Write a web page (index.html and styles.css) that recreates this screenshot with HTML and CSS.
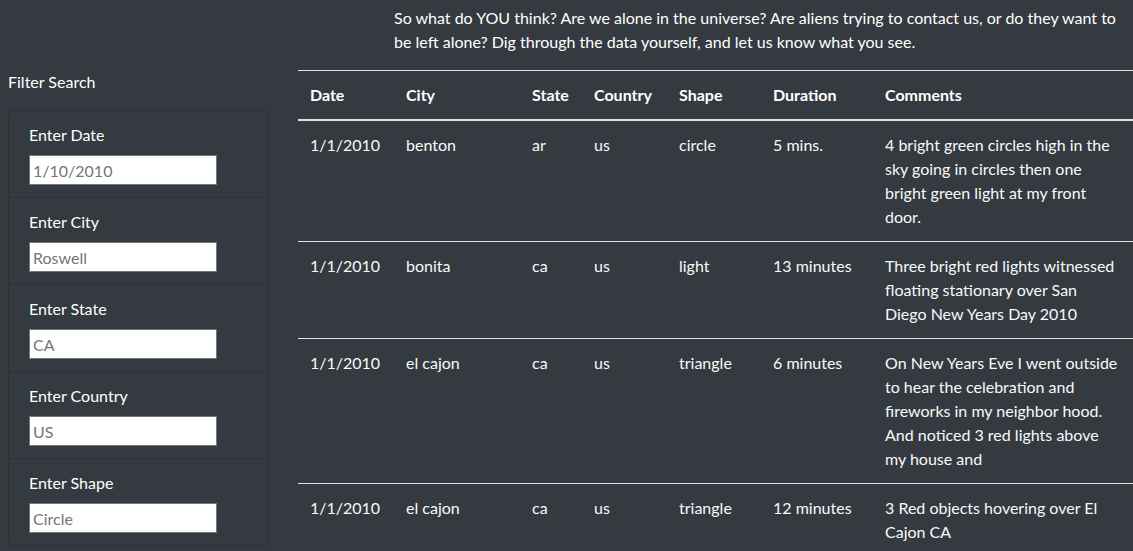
FILE: index.html
```html
<!DOCTYPE html>
<html lang="en">
<head>
<meta charset="utf-8">
<title>UFO Sightings</title>
<link rel="stylesheet" href="styles.css">
</head>
<body>
<div class="page">
  <aside class="sidebar">
    <div class="filter-title">Filter Search</div>
    <ul class="filters">
      <li class="filter-item"><label class="filter-label" for="date">Enter Date</label><input class="filter-input" id="date" type="text" placeholder="1/10/2010"></li>
      <li class="filter-item"><label class="filter-label" for="city">Enter City</label><input class="filter-input" id="city" type="text" placeholder="Roswell"></li>
      <li class="filter-item"><label class="filter-label" for="state">Enter State</label><input class="filter-input" id="state" type="text" placeholder="CA"></li>
      <li class="filter-item"><label class="filter-label" for="country">Enter Country</label><input class="filter-input" id="country" type="text" placeholder="US"></li>
      <li class="filter-item"><label class="filter-label" for="shape">Enter Shape</label><input class="filter-input" id="shape" type="text" placeholder="Circle"></li>
    </ul>
  </aside>
  <main class="main">
    <p class="intro">So what do YOU think? Are we alone in the universe? Are aliens trying to contact us, or do they want to be left alone? Dig through the data yourself, and let us know what you see.</p>
    <table class="ufo-table">
      <colgroup>
        <col class="c-date"><col class="c-city"><col class="c-state"><col class="c-country"><col class="c-shape"><col class="c-duration"><col class="c-comments">
      </colgroup>
      <thead>
        <tr><th>Date</th><th>City</th><th>State</th><th>Country</th><th>Shape</th><th>Duration</th><th>Comments</th></tr>
      </thead>
      <tbody>
        <tr><td>1/1/2010</td><td>benton</td><td>ar</td><td>us</td><td>circle</td><td>5 mins.</td><td>4 bright green circles high in the sky going in circles then one bright green light at my front door.</td></tr>
        <tr><td>1/1/2010</td><td>bonita</td><td>ca</td><td>us</td><td>light</td><td>13 minutes</td><td>Three bright red lights witnessed floating stationary over San Diego New Years Day 2010</td></tr>
        <tr><td>1/1/2010</td><td>el cajon</td><td>ca</td><td>us</td><td>triangle</td><td>6 minutes</td><td>On New Years Eve I went outside to hear the celebration and fireworks in my neighbor hood. And noticed 3 red lights above my house and</td></tr>
        <tr><td>1/1/2010</td><td>el cajon</td><td>ca</td><td>us</td><td>triangle</td><td>12 minutes</td><td>3 Red objects hovering over El Cajon CA</td></tr>
      </tbody>
    </table>
  </main>
</div>
</body>
</html>
```

FILE: styles.css
```css
html, body {
  margin: 0;
  padding: 0;
  background: #343a40;
  color: #fff;
  font-family: "Lato", "Open Sans", sans-serif;
  font-size: 16px;
  line-height: 24px;
  overflow: hidden;
}

.page {
  display: flex;
  gap: 30px;
  padding-left: 8px;
}

.sidebar {
  width: 260px;
  flex: none;
  padding-top: 70px;
}

.filter-title {
  height: 24px;
  margin-bottom: 16px;
}

.filters {
  list-style: none;
  margin: 0;
  padding: 0;
  border: 1px solid #2c3136;
  border-radius: 4px;
}

.filter-item {
  display: flex;
  flex-direction: column;
  align-items: flex-start;
  padding: 12px 20px 12px 20px;
  height: 62px;
}

.filter-item + .filter-item {
  border-top: 1px solid #2c3136;
}

.filter-label {
  display: block;
  height: 24px;
  margin-bottom: 8px;
}

.filter-input {
  box-sizing: border-box;
  width: 188px;
  height: 30px;
  margin: 0;
  padding: 1px 3px;
  border: 1px solid #767676;
  background: #fff;
  font-family: inherit;
  font-size: 16px;
  color: #333;
}

.filter-input::placeholder {
  color: #757575;
}

.main {
  flex: 1;
  min-width: 0;
}

.intro {
  margin: 6px 8px 16px 96px;
  line-height: 24px;
}

.ufo-table {
  width: 835px;
  table-layout: fixed;
  border-collapse: collapse;
  background: #343a40;
}

.c-date { width: 96px; }
.c-city { width: 126px; }
.c-state { width: 62px; }
.c-country { width: 85px; }
.c-shape { width: 94px; }
.c-duration { width: 112px; }
.c-comments { width: 260px; }

.ufo-table th,
.ufo-table td {
  padding: 12px;
  text-align: left;
  vertical-align: top;
  border-top: 1px solid #dee2e6;
}

.ufo-table th {
  font-weight: 700;
  border-bottom: 2px solid #dee2e6;
}

.ufo-table td {
  color: #f8f9fa;
}
```
